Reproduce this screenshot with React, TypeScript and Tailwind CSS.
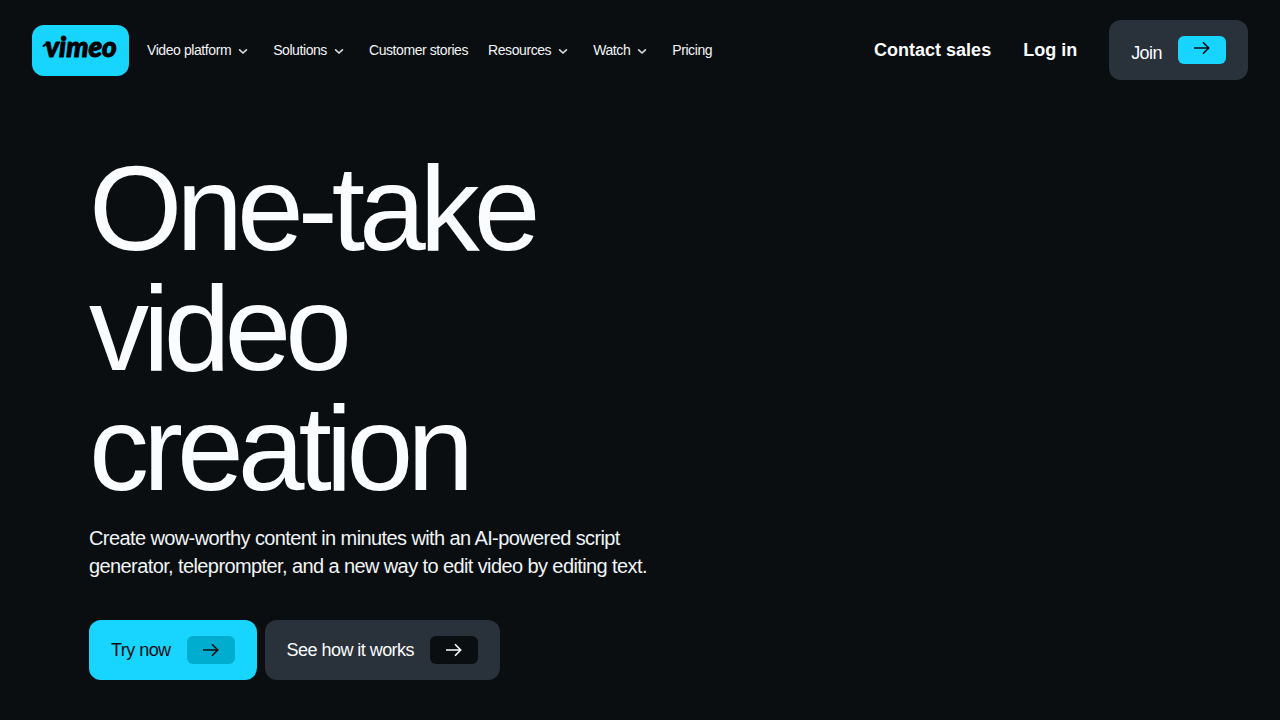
import type { ReactNode } from 'react';
import clsx from 'clsx';

interface NavItem {
  label: string;
  hasMenu: boolean;
}

const NAV_ITEMS: NavItem[] = [
  { label: 'Video platform', hasMenu: true },
  { label: 'Solutions', hasMenu: true },
  { label: 'Customer stories', hasMenu: false },
  { label: 'Resources', hasMenu: true },
  { label: 'Watch', hasMenu: true },
  { label: 'Pricing', hasMenu: false },
];

const ChevronIcon = () => (
  <svg
    viewBox="0 0 16 16"
    className="ml-1 mr-0.5 h-4 w-4 text-[#d3d8de]"
    fill="none"
    aria-hidden="true"
  >
    <path
      d="M4.6 7.8 8 11l3.4-3.2"
      stroke="currentColor"
      strokeWidth="1.7"
      strokeLinecap="round"
      strokeLinejoin="round"
    />
  </svg>
);

const ArrowIcon = () => (
  <svg viewBox="0 0 16 16" className="h-4 w-4" fill="none" aria-hidden="true">
    <path d="M0 8h14.5M9 2.3 14.7 8 9 13.7" stroke="currentColor" strokeWidth="1.6" />
  </svg>
);

const Logo = () => (
  <a
    href="#"
    aria-label="Vimeo"
    className="flex h-[51px] w-[97px] items-center justify-center rounded-xl bg-[#17d5ff] text-black"
  >
    <svg viewBox="0 0 97 51" className="h-full w-full">
      {/* swash leading into the wordmark */}
      <path
        d="M11.5 21c1.6-1.5 3-2.600 5-2.700"
        stroke="currentColor"
        strokeWidth="2"
        strokeLinecap="round"
        fill="none"
      />
      <text
        x="49"
        y="32"
        textAnchor="middle"
        fill="currentColor"
        stroke="currentColor"
        strokeWidth="1"
        strokeLinejoin="round"
        className="font-['Lato',sans-serif] text-[28px] font-black italic"
      >
        vimeo
      </text>
    </svg>
  </a>
);

interface ActionButtonProps {
  children: ReactNode;
  className: string;
  pillClassName: string;
}

const ActionButton = ({ children, className, pillClassName }: ActionButtonProps) => (
  <button
    type="button"
    className={clsx(
      'flex cursor-pointer gap-4 rounded-xl px-[22px] py-4 text-lg leading-[22px] tracking-[-0.03em]',
      className
    )}
  >
    <span>{children}</span>
    <span className={clsx('flex h-7 w-12 justify-center rounded-md', pillClassName)}>
      <ArrowIcon />
    </span>
  </button>
);

const Header = () => (
  <header className="flex items-center justify-between px-8 py-5">
    <div className="flex items-center gap-[18px]">
      <Logo />
      <nav
        aria-label="Main"
        className="flex items-center gap-5 text-sm tracking-[-0.03em] text-[#f1f4f6]"
      >
        {NAV_ITEMS.map(({ label, hasMenu }) =>
          hasMenu ? (
            <button key={label} type="button" className="flex cursor-pointer items-center">
              {label}
              <ChevronIcon />
            </button>
          ) : (
            <a key={label} href="#">
              {label}
            </a>
          )
        )}
      </nav>
    </div>

    <div className="flex items-center gap-8 text-lg font-bold">
      <a href="#">Contact sales</a>
      <a href="#">Log in</a>
      <ActionButton
        className="items-end bg-[#29313b] font-normal"
        pillClassName="items-start bg-[#17d5ff] pt-1 text-[#0a0e11]"
      >
        Join
      </ActionButton>
    </div>
  </header>
);

const Hero = () => (
  <main className="mx-auto max-w-[1102px] pb-10 pt-12">
    <div className="max-w-xl">
      <h1 className="text-[120px] leading-[120px] tracking-tighter">One-take video creation</h1>
      <p className="mt-4 text-xl leading-7 tracking-[-0.03em] text-[#f1f4f6]">
        Create wow-worthy content in minutes with an AI-powered script generator, teleprompter, and
        a new way to edit video by editing text.
      </p>
      <div className="mt-10 flex gap-2">
        <ActionButton
          className="items-center bg-[#17d5ff] text-[#0a0e11]"
          pillClassName="items-center bg-[#00adcf]"
        >
          Try now
        </ActionButton>
        <ActionButton className="items-center bg-[#29313b]" pillClassName="items-center bg-[#0a0e11]">
          See how it works
        </ActionButton>
      </div>
    </div>
  </main>
);

const App = () => {
  return (
    <div className="min-h-screen bg-[#0a0e11] font-['Liberation_Sans',Arial,sans-serif] text-[#fafcfd]">
      <Header />
      <Hero />
    </div>
  );
};

export default App;
